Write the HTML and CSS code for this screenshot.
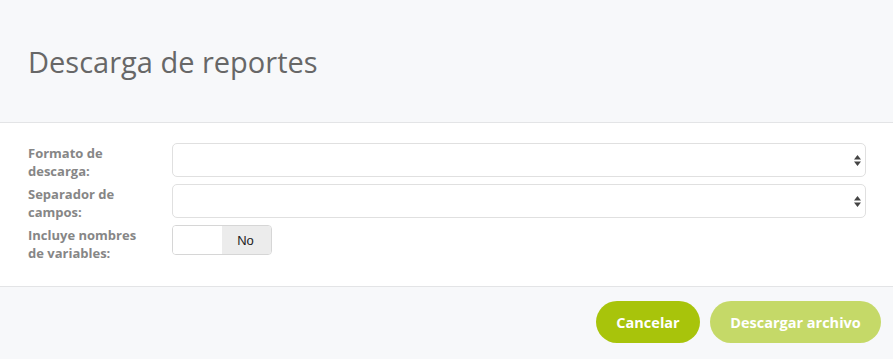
FILE: index.html
```html
<!DOCTYPE html>
<html>
<head>
<meta charset="utf-8">
<link rel="stylesheet" href="styles.css">
</head>
<body>
<div class="modal">
  <div class="modal-header">
    <h1 class="title">Descarga de reportes</h1>
  </div>
  <div class="modal-body">
    <div class="row">
      <label class="label">Formato de descarga:</label>
      <div class="select"><span class="arrows"><svg width="7" height="11" viewBox="0 0 7 11"><path d="M3.5 0 L7 4.5 L0 4.5 Z M3.5 11 L7 6.5 L0 6.5 Z" fill="#444"/></svg></span></div>
    </div>
    <div class="row">
      <label class="label">Separador de campos:</label>
      <div class="select"><span class="arrows"><svg width="7" height="11" viewBox="0 0 7 11"><path d="M3.5 0 L7 4.5 L0 4.5 Z M3.5 11 L7 6.5 L0 6.5 Z" fill="#444"/></svg></span></div>
    </div>
    <div class="row row-toggle">
      <label class="label">Incluye nombres de variables:</label>
      <div class="toggle"><span class="toggle-blank"></span><span class="toggle-no">No</span></div>
    </div>
  </div>
  <div class="modal-footer">
    <button class="btn btn-cancel">Cancelar</button>
    <button class="btn btn-download">Descargar archivo</button>
  </div>
</div>
</body>
</html>
```

FILE: styles.css
```css
* { box-sizing: border-box; }
html, body { margin: 0; padding: 0; background: #fff; }
body { font-family: "Open Sans", "Liberation Sans", sans-serif; }
.modal { width: 893px; height: 359px; display: flex; flex-direction: column; }
.modal-header {
  height: 123px;
  background: #f7f8fa;
  border-bottom: 1px solid #e3e4e6;
  display: flex;
  align-items: center;
  padding: 0 28px 0;
}
.title {
  margin: 0;
  font-size: 29px;
  font-weight: 400;
  color: #676767;
}
.modal-body {
  height: 163px;
  padding: 20px 27px 0 28px;
  display: flex;
  flex-direction: column;
  gap: 7px;
}
.row { display: flex; align-items: flex-start; height: 34px; }
.row-toggle { height: 30px; }
.label {
  width: 144px;
  flex: none;
  padding-right: 30px;
  font-size: 13px;
  font-weight: 700;
  line-height: 18px;
  color: #868686;
  padding-top: 1px;
}
.select {
  flex: 1;
  height: 34px;
  border: 1px solid #e0e0e0;
  border-radius: 5px;
  background: #fff;
  display: flex;
  align-items: center;
  justify-content: flex-end;
  padding-right: 4px;
}
.arrows { display: flex; }
.toggle {
  width: 100px;
  height: 30px;
  border: 1px solid #d6d6d6;
  border-radius: 4px;
  display: flex;
  overflow: hidden;
}
.toggle-blank { width: 49px; background: #fff; }
.toggle-no {
  flex: 1;
  background: #ececec;
  font-family: "Liberation Sans", Arial, sans-serif;
  font-size: 13px;
  color: #222;
  display: flex;
  align-items: center;
  justify-content: center;
  padding-right: 2px;
}
.modal-footer {
  flex: 1;
  background: #f7f8fa;
  border-top: 1px solid #e3e4e6;
  display: flex;
  justify-content: flex-end;
  align-items: center;
  gap: 10px;
  padding: 0 12px 2px 0;
}
.btn {
  height: 42px;
  border: none;
  border-radius: 21px;
  color: #fff;
  font-family: "Open Sans", "Liberation Sans", sans-serif;
  font-weight: 700;
  font-size: 14.5px;
  padding: 0;
}
.btn-cancel { width: 104px; background: #a8c40b; }
.btn-download { width: 171px; background: #c5d968; }
```
